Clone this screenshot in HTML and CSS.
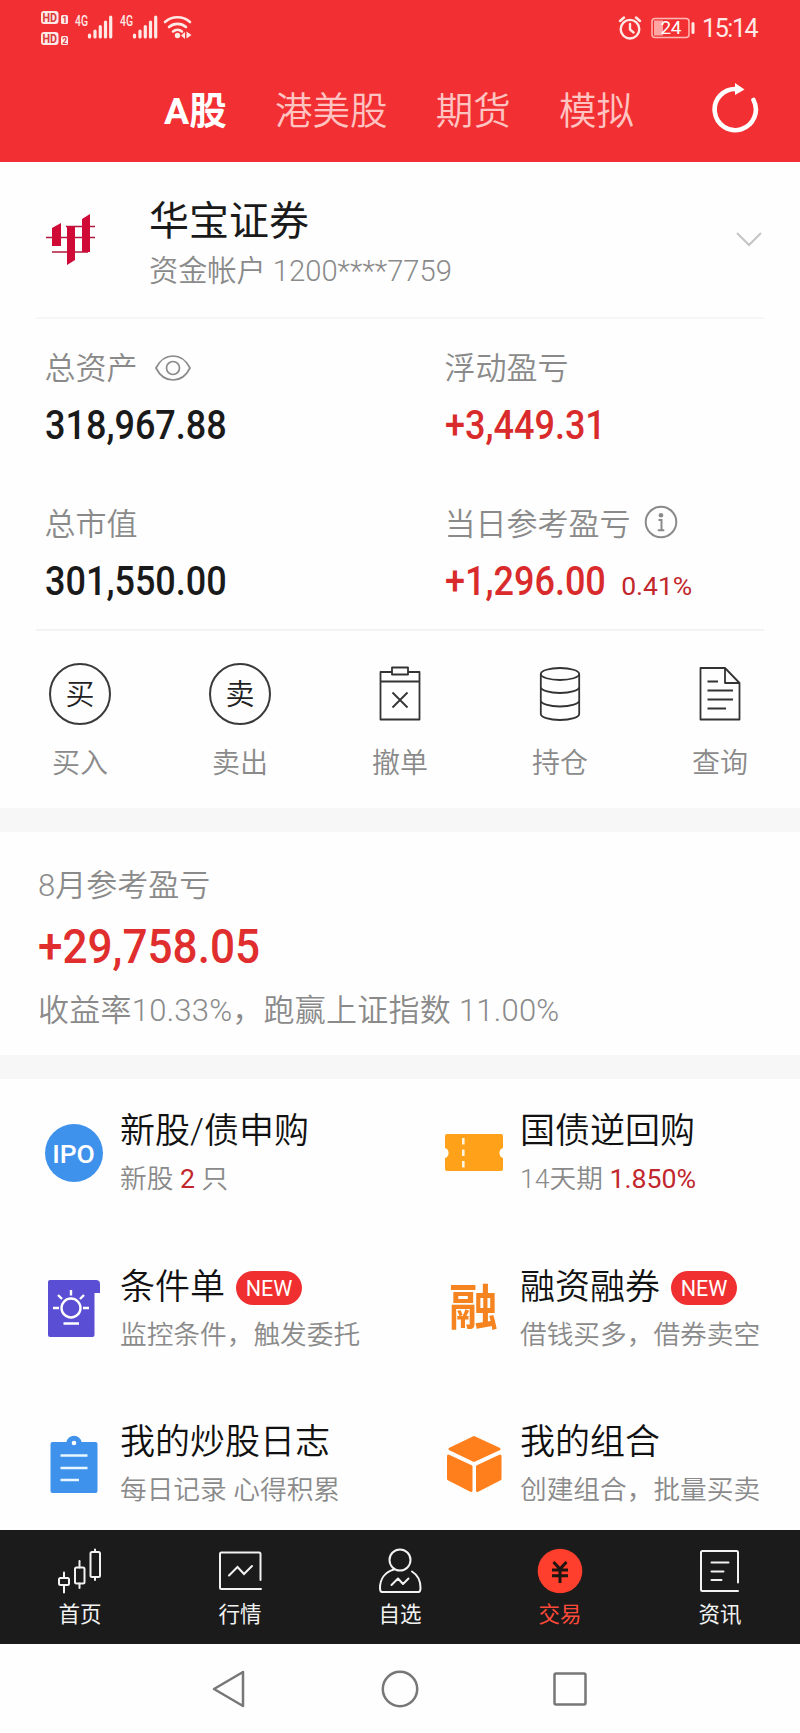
FILE: index.html
```
<!DOCTYPE html>
<html lang="zh-CN">
<head>
  <meta charset="UTF-8" />
  <meta name="viewport" content="width=device-width, initial-scale=1.0"/>
  <title>交易</title>
  <link rel="stylesheet" href="styles.css">
</head>
<body>

  <!-- Header -->
  <header class="header">
    <div class="status-bar">
      <svg class="status-left" width="156" height="36" viewBox="0 0 156 36">
        <g fill="#ffe9e6">
          <rect x="1" y="1" width="17.500" height="13" rx="3"/>
          <rect x="21" y="5" width="7" height="9" rx="1.500"/>
          <rect x="1" y="22" width="17.500" height="13" rx="3"/>
          <rect x="21" y="26" width="7" height="9" rx="1.500"/>
        </g>
        <g class="hd-text">
          <text x="2.500" y="11.500" textLength="14.500" lengthAdjust="spacingAndGlyphs">HD</text>
          <text x="2.500" y="32.500" textLength="14.500" lengthAdjust="spacingAndGlyphs">HD</text>
          <text class="tiny" x="22.300" y="12.500">1</text>
          <text class="tiny" x="22.300" y="33.500">2</text>
        </g>
        <g class="net-text">
          <text x="35" y="16" textLength="13" lengthAdjust="spacingAndGlyphs">4G</text>
          <text x="80" y="16" textLength="13" lengthAdjust="spacingAndGlyphs">4G</text>
        </g>
        <g stroke="#ffe9e6" stroke-width="3.200" stroke-linecap="round">
          <path d="M49.500 25v2M55 21v6M60.300 16.500v10.500M65.500 12v15M70.700 7v20"/>
          <path d="M94.500 25v2M100 21v6M105.300 16.500v10.500M110.500 12v15M115.700 7v20"/>
        </g>
        <g stroke="#ffe9e6" stroke-width="2.600" fill="none" stroke-linecap="round">
          <path d="M125 12a19 19 0 0 1 25 0M129 17a13 13 0 0 1 17 0M133 21.500a7 7 0 0 1 9 0"/>
        </g>
        <circle cx="137.500" cy="25.500" r="2.700" fill="#ffe9e6"/>
        <path d="M141 25.500l4-3.500v7zM151.500 25l-5-3.500v7z" fill="#ffe9e6"/>
      </svg>
      <div class="status-right">
        <svg width="24" height="24" viewBox="0 0 24 24" fill="none" stroke="#ffe9e6" stroke-width="2.400" stroke-linecap="round">
          <circle cx="12" cy="13.200" r="9.300"/>
          <path d="M12 8v5.500l3.500 3M2 5l4-3.500M22 5l-4-3.500"/>
        </svg>
        <svg class="battery" width="44" height="22" viewBox="0 0 44 22">
          <rect x="1" y="1.500" width="37" height="19" rx="3" fill="none" stroke="#ffb9b5" stroke-width="1.500"/>
          <rect x="3" y="3.500" width="9" height="15" fill="#ffa6a3"/>
          <rect x="40.500" y="5" width="3" height="12" rx="1.500" fill="#ffe9e6"/>
          <text x="9.500" y="17" textLength="21">24</text>
        </svg>
        <span class="clock">15:14</span>
      </div>
    </div>
    <nav class="tabs">
      <a class="tab active">A股</a>
      <a class="tab">港美股</a>
      <a class="tab">期货</a>
      <a class="tab">模拟</a>
      <svg class="refresh" width="48" height="52" viewBox="0 0 48 52">
        <path d="M24.500 7A20.600 20.600 0 1 0 41.500 18" fill="none" stroke="#fff" stroke-width="4.600" stroke-linecap="round"/>
        <path d="M23 1l9.500 6.500L23 13z" fill="#fff"/>
      </svg>
    </nav>
  </header>

  <!-- Account -->
  <section class="account">
    <svg class="broker-logo" width="50" height="52" viewBox="0 0 50 52">
      <path d="M0 23.500h49M20 12.500h29M6 38h36" stroke="#b3173d" stroke-width="1.400"/>
      <path d="M6 14l9-5v23H6zM21 12.500h8V46l-8 5zM36 5l8-5v38h-8z" fill="#cf0a36"/>
    </svg>
    <div class="account-text">
      <div class="account-name">华宝证券</div>
      <div class="account-no">资金帐户 1200****7759</div>
    </div>
    <svg class="chevron" width="26" height="15" viewBox="0 0 26 15">
      <path d="M1 1l12 12L25 1" fill="none" stroke="#c4c4c4" stroke-width="2"/>
    </svg>
  </section>

  <!-- Assets -->
  <section class="assets">
    <div class="asset">
      <div class="asset-label">总资产
        <svg class="eye" width="36" height="26" viewBox="0 0 36 26" fill="none" stroke="#8a8a8a" stroke-width="1.700">
          <path d="M1 13C5 5 11 1 18 1s13 4 17 12c-4 8-10 12-17 12S5 21 1 13z"/>
          <circle cx="18" cy="13" r="6.500"/>
        </svg>
      </div>
      <div class="asset-value"><span class="num">318,967.88</span></div>
    </div>
    <div class="asset">
      <div class="asset-label">浮动盈亏</div>
      <div class="asset-value up"><span class="num">+3,449.31</span></div>
    </div>
    <div class="asset">
      <div class="asset-label">总市值</div>
      <div class="asset-value"><span class="num">301,550.00</span></div>
    </div>
    <div class="asset">
      <div class="asset-label">当日参考盈亏
        <svg class="info" width="34" height="34" viewBox="0 0 34 34" fill="none" stroke="#8a8a8a" stroke-width="2">
          <circle cx="17" cy="17" r="15.300"/>
          <path d="M14.500 15h3v10M13.800 25.300h6.500" />
          <circle cx="17" cy="10.300" r="2.300" fill="#8a8a8a" stroke="none"/>
        </svg>
      </div>
      <div class="asset-value up"><span class="num">+1,296.00</span><span class="percent">0.41%</span></div>
    </div>
  </section>

  <!-- Actions -->
  <section class="actions">
    <a class="action">
      <span class="action-icon"><span class="ring">买</span></span>
      <span>买入</span>
    </a>
    <a class="action">
      <span class="action-icon"><span class="ring">卖</span></span>
      <span>卖出</span>
    </a>
    <a class="action">
      <span class="action-icon">
        <svg width="42" height="56" viewBox="0 0 42 56" fill="none" stroke="#333" stroke-width="1.800" stroke-linejoin="round">
          <path d="M13 6H1.500v47.500h39V6H29M1.500 15.500h39"/>
          <rect x="13" y="1.500" width="16" height="7"/>
          <path d="M13.500 26.500l15 15M28.500 26.500l-15 15"/>
        </svg>
      </span>
      <span>撤单</span>
    </a>
    <a class="action">
      <span class="action-icon">
        <svg width="42" height="56" viewBox="0 0 42 56" fill="none" stroke="#333" stroke-width="1.800">
          <ellipse cx="21" cy="8" rx="19.200" ry="6"/>
          <path d="M1.800 8v40c0 3 8 6 19.200 6s19.200-3 19.200-6V8M1.800 21c0 3 8 6 19.200 6s19.200-3 19.200-6M1.800 34.500c0 3 8 6 19.200 6s19.200-3 19.200-6"/>
        </svg>
      </span>
      <span>持仓</span>
    </a>
    <a class="action">
      <span class="action-icon">
        <svg width="42" height="56" viewBox="0 0 42 56" fill="none" stroke="#333" stroke-width="1.800" stroke-linejoin="round">
          <path d="M26 2H1.500v51.500h39V17zM26 2v15h14.500"/>
          <path d="M8.500 15.500H19M8.500 24.500h25.500M8.500 33.500h25.500M8.500 42.500h18.500"/>
        </svg>
      </span>
      <span>查询</span>
    </a>
  </section>

  <!-- Monthly profit -->
  <section class="month">
    <div class="month-label">8月参考盈亏</div>
    <div class="month-value"><span class="num">+29,758.05</span></div>
    <div class="month-note">收益率10.33%，跑赢上证指数 11.00%</div>
  </section>

  <!-- Services -->
  <section class="services">
    <a class="service">
      <span class="service-icon"><span class="ipo">IPO</span></span>
      <span class="service-text">
        <span class="service-title">新股/债申购</span>
        <span class="service-sub">新股 <b>2</b> 只</span>
      </span>
    </a>
    <a class="service">
      <span class="service-icon">
        <svg width="58" height="38" viewBox="0 0 58 38">
          <path d="M2 0h54q2 0 2 2v12a5.300 5.300 0 0 0 0 10v11q0 2-2 2H2q-2 0-2-2V24a5.300 5.300 0 0 0 0-10V2q0-2 2-2z" fill="#ffa219"/>
          <path d="M18.300 4v6.500M18.300 15.500v6.500M18.300 27v6.500" stroke="#fff4dc" stroke-width="2.600"/>
        </svg>
      </span>
      <span class="service-text">
        <span class="service-title">国债逆回购</span>
        <span class="service-sub">14天期 <b>1.850%</b></span>
      </span>
    </a>
    <a class="service">
      <span class="service-icon">
        <svg width="54" height="58" viewBox="0 0 54 58">
          <path d="M3 0h46q4 0 4 4v9h-5.500v42q0 2-2 2H3q-2 0-2-2V2q0-2 2-2z" fill="#5a4fd4"/>
          <g fill="none" stroke="#fff" stroke-width="2.400">
            <circle cx="24" cy="28" r="9.500"/>
            <path d="M24 10v5.500M6 28h6M36 28h6M11 15l4 4M37 15l-4 4M16.500 43.500h15.500"/>
          </g>
        </svg>
      </span>
      <span class="service-text">
        <span class="service-title">条件单 <i class="new">NEW</i></span>
        <span class="service-sub">监控条件，触发委托</span>
      </span>
    </a>
    <a class="service">
      <span class="service-icon"><span class="rong">融</span></span>
      <span class="service-text">
        <span class="service-title">融资融券 <i class="new">NEW</i></span>
        <span class="service-sub">借钱买多，借券卖空</span>
      </span>
    </a>
    <a class="service">
      <span class="service-icon">
        <svg width="48" height="58" viewBox="0 0 48 58">
          <path d="M2.500 7h14a7.600 7.600 0 0 1 15 0h14q2 0 2 2v47q0 2-2 2h-43q-2 0-2-2V9q0-2 2-2z" fill="#3f92ec"/>
          <circle cx="24" cy="8" r="2.300" fill="#fff"/>
          <path d="M10.500 20.500h27M10.500 33h27M10.500 45h18.500" stroke="#e8f6ff" stroke-width="2.600"/>
        </svg>
      </span>
      <span class="service-text">
        <span class="service-title">我的炒股日志</span>
        <span class="service-sub">每日记录 心得积累</span>
      </span>
    </a>
    <a class="service">
      <span class="service-icon">
        <svg width="56" height="58" viewBox="0 0 56 58" fill="#ff7f1c" stroke="#ff7f1c" stroke-width="3" stroke-linejoin="round">
          <path d="M28 2.500L53 14 28 25.500 4 14z"/>
          <path d="M2.500 21L25 31.500v24L2.500 44z"/>
          <path d="M54 21L31.500 31.500v24L54 44z"/>
        </svg>
      </span>
      <span class="service-text">
        <span class="service-title">我的组合</span>
        <span class="service-sub">创建组合，批量买卖</span>
      </span>
    </a>
  </section>

  <!-- Tab bar -->
  <nav class="tabbar">
    <a class="tabbar-item">
      <svg width="46" height="46" viewBox="0 0 46 46" fill="none" stroke="#f2f2f2" stroke-width="2" stroke-linecap="round">
        <rect x="2" y="30" width="10" height="7" rx="1.500"/>
        <path d="M7 24.500V30M7 37v7.500M22.500 13v6.500M22.500 35.500V40M38 1.500V4M38 29v3"/>
        <rect x="18" y="19.500" width="9.500" height="16" rx="1.500"/>
        <rect x="33.500" y="4" width="9.500" height="25" rx="1.500"/>
      </svg>
      <span>首页</span>
    </a>
    <a class="tabbar-item">
      <svg width="46" height="46" viewBox="0 0 46 46" fill="none" stroke="#f2f2f2" stroke-width="2" stroke-linecap="round">
        <path d="M43.500 32V6q0-1.500-1.500-1.500H4.500Q3 4.500 3 6v33.500Q3 41 4.500 41H44"/>
        <path d="M12 27.500l8.500-8.500 6.500 7 8-8"/>
      </svg>
      <span>行情</span>
    </a>
    <a class="tabbar-item">
      <svg width="46" height="46" viewBox="0 0 46 46" fill="none" stroke="#f2f2f2" stroke-width="2" stroke-linecap="round" stroke-linejoin="round">
        <circle cx="23" cy="12" r="10.500"/>
        <path d="M17 21.500C8 24 3 31 3 40q0 4 2 4h36.500q2 0 2-4c0-7-2-12.500-8.500-16.500"/>
        <path d="M14.500 37l6.500-6.500 5 5.500 5.500-5.500"/>
      </svg>
      <span>自选</span>
    </a>
    <a class="tabbar-item current">
      <svg width="46" height="46" viewBox="0 0 46 46">
        <circle cx="23" cy="23" r="22.300" fill="#ff3f2d"/>
        <path d="M16.500 14l6.500 7 6.500-7M15 22h16M15 27.700h16M23 21v14" fill="none" stroke="#1d1512" stroke-width="3"/>
      </svg>
      <span>交易</span>
    </a>
    <a class="tabbar-item">
      <svg width="46" height="46" viewBox="0 0 46 46" fill="none" stroke="#f2f2f2" stroke-width="2" stroke-linecap="round">
        <path d="M41 34.500V4.500Q41 3 39.500 3h-34Q4 3 4 4.500v37Q4 43 5.500 43H41"/>
        <path d="M14.500 14.500h17M14.500 23.500h12M14.500 32h10"/>
      </svg>
      <span>资讯</span>
    </a>
  </nav>

  <!-- System keys -->
  <footer class="syskeys">
    <svg width="34" height="38" viewBox="0 0 34 38" fill="none" stroke="#777" stroke-width="2.500" stroke-linejoin="round">
      <path d="M31 2v34L2 19z"/>
    </svg>
    <svg width="38" height="38" viewBox="0 0 38 38" fill="none" stroke="#777" stroke-width="2.500">
      <circle cx="19" cy="19" r="17.200"/>
    </svg>
    <svg width="34" height="34" viewBox="0 0 34 34" fill="none" stroke="#777" stroke-width="2.500">
      <rect x="1.500" y="1.500" width="31" height="31" rx="1.500"/>
    </svg>
  </footer>

</body>
</html>
```
FILE: styles.css
```
* {
  box-sizing: border-box;
}

body {
  font-family: Roboto, "Noto Sans CJK SC", sans-serif;
  font-weight: 350;
  background-color: #fefefe;
  color: #1a1a1a;
  width: 800px;
  margin: 0;
}

svg {
  display: block;
  flex: none;
}

/* Header */
.header {
  height: 162px;
  background-color: #f23033;
}

.status-bar {
  height: 56px;
  padding: 0 43px 0 40px;
  display: flex;
  justify-content: space-between;
  align-items: center;
}

.hd-text {
  font-size: 12px;
  font-weight: 700;
  fill: #d8383a;
}

.tiny {
  font-size: 8.5px;
}

.net-text {
  font-size: 14px;
  font-weight: 500;
  fill: #ffe9e6;
}

.status-right {
  display: flex;
  align-items: center;
}

.battery {
  margin: 0 7px 0 9px;
}

.battery text {
  font-size: 19px;
  font-weight: 400;
  fill: #fff;
}

.clock {
  font-size: 25px;
  font-weight: 400;
  color: #ffe9e6;
  width: 55px;
  letter-spacing: -1.4px;
  white-space: nowrap;
}

.tabs {
  height: 106px;
  padding: 0 40px 0 164px;
  display: flex;
  align-items: center;
  gap: 48.3px;
}

.tab {
  font-size: 37.5px;
  line-height: 40px;
  color: #ffc4c2;
  margin-top: 4px;
}

.tab.active {
  color: #fff;
  font-weight: 700;
}

.refresh {
  margin: -2px 0 0 auto;
}

/* Account */
.account {
  height: 157px;
  margin: 0 36px;
  padding: 0 2px 0 10px;
  display: flex;
  align-items: center;
  border-bottom: 2px solid #f6f6f6;
}

.account-text {
  margin-left: 53px;
  padding-top: 8px;
  flex: 1;
}

.account-name {
  font-size: 40px;
  line-height: 54px;
  font-weight: 400;
}

.account-no {
  font-size: 29.2px;
  line-height: 44px;
  color: #8a8a8a;
}

/* Assets */
.assets {
  height: 312px;
  margin: 0 36px;
  padding-top: 23px;
  display: grid;
  grid-template-columns: 400px 1fr;
  grid-template-rows: 155.5px 1fr;
  border-bottom: 2px solid #f3f3f3;
}

.asset {
  padding-left: 8.5px;
}

.asset-label {
  font-size: 31px;
  line-height: 54px;
  color: #8a8a8a;
  display: flex;
  align-items: center;
}

.eye {
  margin: -3px 0 0 17px;
}

.info {
  margin: -5px 0 0 13px;
}

.asset-value {
  height: 60px;
  line-height: 60px;
  font-size: 40px;
  display: flex;
}

.num {
  display: inline-block;
  font-weight: 500;
  transform: scaleX(0.9);
  transform-origin: left;
}

.up {
  color: #d92b2b;
}

.percent {
  font-size: 26.5px;
  font-weight: 400;
  color: #c1272d;
  margin: 4px 0 0 -2px;
}

/* Actions */
.actions {
  height: 177px;
  padding-top: 32px;
  display: grid;
  grid-template-columns: repeat(5, 1fr);
}

.action {
  display: flex;
  flex-direction: column;
  align-items: center;
  font-size: 28px;
  line-height: 40px;
  color: #8a8a8a;
}

.action-icon {
  height: 62px;
  margin-bottom: 19px;
  display: flex;
  align-items: center;
}

.ring {
  width: 62px;
  height: 62px;
  border: 2px solid #3a3a3a;
  border-radius: 50%;
  font-size: 29px;
  line-height: 60px;
  text-align: center;
  color: #222;
}

/* Monthly profit */
.month {
  height: 271px;
  padding: 25px 38px 0;
  border: solid #f7f7f7;
  border-width: 24px 0;
  color: #8a8a8a;
}

.month-label {
  font-size: 31px;
  line-height: 58px;
}

.month-value {
  font-size: 49px;
  line-height: 64px;
  color: #e02e2e;
}

.month-note {
  font-size: 31px;
  line-height: 64px;
  letter-spacing: 0.25px;
  white-space: nowrap;
}

/* Services */
.services {
  height: 451px;
  padding-top: 25px;
  display: grid;
  grid-template-columns: 1fr 1fr;
  grid-auto-rows: 155.5px;
  overflow: hidden;
}

.service {
  display: flex;
  align-items: flex-start;
}

.service-icon {
  width: 120px;
  height: 98px;
  padding-left: 27px;
  display: flex;
  align-items: center;
  justify-content: center;
}

.ipo {
  width: 58px;
  height: 58px;
  border-radius: 50%;
  background-color: #3f92ec;
  color: #fff;
  font-size: 26.5px;
  font-weight: 500;
  line-height: 60px;
  text-align: center;
}

.rong {
  color: #f5831f;
  font-size: 49px;
  font-weight: 700;
  line-height: 60px;
}

.service-text {
  display: flex;
  flex-direction: column;
}

.service-title {
  font-size: 35px;
  line-height: 56px;
  color: #111;
  display: flex;
  align-items: center;
  white-space: nowrap;
}

.new {
  width: 66px;
  height: 34px;
  margin-left: 11px;
  border-radius: 17px;
  background-color: #f03030;
  color: #fff;
  font-size: 21.5px;
  font-style: normal;
  font-weight: 400;
  line-height: 35px;
  text-align: center;
}

.service-sub {
  font-size: 26.7px;
  line-height: 38px;
  color: #8a8a8a;
  white-space: nowrap;
}

.service-sub b {
  font-weight: 400;
  color: #c1272d;
}

/* Tab bar */
.tabbar {
  height: 114px;
  padding-top: 18px;
  background-color: #1b1b1b;
  display: grid;
  grid-template-columns: repeat(5, 1fr);
}

.tabbar-item {
  display: flex;
  flex-direction: column;
  align-items: center;
  gap: 6px;
  font-size: 21.5px;
  font-weight: 400;
  line-height: 30px;
  color: #f2f2f2;
}

.current {
  color: #ff4a3a;
}

/* System keys */
.syskeys {
  height: 89px;
  padding: 0 213px 0 212px;
  display: flex;
  align-items: center;
  justify-content: space-between;
}
```
